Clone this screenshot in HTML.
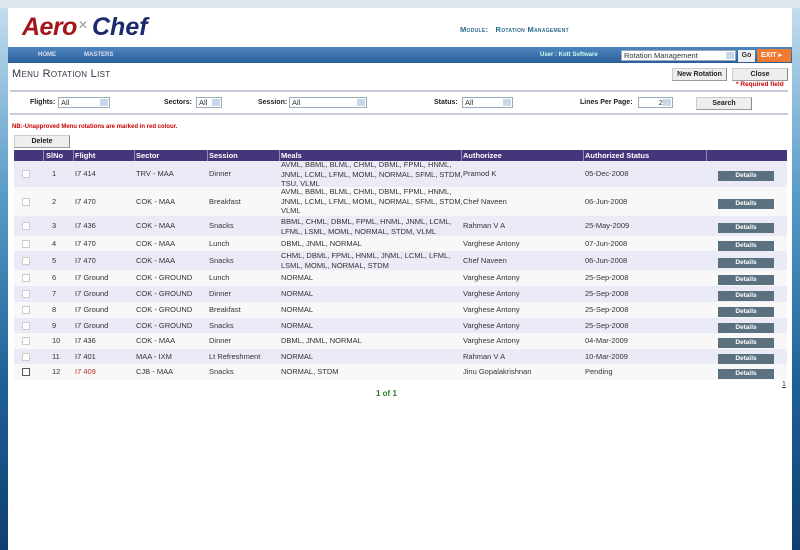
<!DOCTYPE html>
<html><head><meta charset="utf-8"><style>
*{margin:0;padding:0;box-sizing:border-box}
body{width:800px;height:550px;overflow:hidden;position:relative;font-family:"Liberation Sans",sans-serif;font-size:7.5px;color:#333;
background:linear-gradient(180deg,#c8dff0 0%,#5a9cc8 35%,#1e5f96 70%,#0f3f70 100%)}
.a{position:absolute}
#top{left:0;top:0;width:800px;height:8px;background:#dde7ec}
#panel{left:8px;top:8px;width:784px;height:542px;background:#fff}
.sel{position:absolute;height:11px;border:1px solid #9ab;background:#fff;font-size:7.5px;padding-left:2px;line-height:9px}
.sel:after{content:"";position:absolute;right:1px;top:1px;width:8px;height:7px;background:#c8d8ec}
.btn{position:absolute;height:13px;background:#eee;border:1px solid #ccc;border-right:1px solid #888;border-bottom:1px solid #999;font-weight:bold;font-size:7px;text-align:center;line-height:11px;color:#222}
.lbl{position:absolute;font-weight:bold;font-size:7px;color:#222}
.row{position:absolute;left:14px;width:773px}
.c{position:absolute;line-height:9.5px}
.cb{position:absolute;left:8px;width:8px;height:8px;border:1px solid #ccc;background:#fff}
.det{position:absolute;left:704px;width:56px;height:10px;background:#5b7180;color:#fff;font-weight:bold;font-size:6.5px;text-align:center;line-height:10px}
</style></head><body>
<div class="a" id="top"></div>
<div class="a" id="panel"></div>
<div class="a" style="left:22px;top:13px;font:italic bold 25px 'Liberation Sans',sans-serif;color:#a3161c;letter-spacing:-0.5px">Aero</div>
<div class="a" style="left:78px;top:18px;color:#999;font-size:12px">✕</div>
<div class="a" style="left:92px;top:13px;font:italic bold 25px 'Liberation Sans',sans-serif;color:#1a2a6a">Chef</div>
<div class="a" style="left:460px;top:25px;font-size:7.5px;font-weight:bold;color:#2a6a8a;font-variant:small-caps;letter-spacing:0.3px">Module:&nbsp;&nbsp; Rotation Management</div>
<div class="a" style="left:8px;top:47px;width:784px;height:16px;background:linear-gradient(#4f86c0,#2a5f9a)"></div>
<div class="a" style="left:38px;top:52px;color:#dde;font-size:6px;font-weight:bold">HOME</div>
<div class="a" style="left:84px;top:52px;color:#dde;font-size:6px;font-weight:bold">MASTERS</div>
<div class="a" style="left:540px;top:52px;color:#cfe;font-size:6px;font-weight:bold">User : Kott Software</div>
<div class="sel" style="left:621px;top:50px;width:115px">Rotation Management</div>
<div class="a" style="left:738px;top:50px;width:17px;height:12px;background:#eee;font-weight:bold;font-size:7px;text-align:center;line-height:12px">Go</div>
<div class="a" style="left:757px;top:49px;width:34px;height:13px;background:#f07a30;color:#fff;font-weight:bold;font-size:7px;line-height:13px;padding-left:4px">EXIT ▸</div>
<div class="a" style="left:12px;top:68px;font-size:11px;color:#334;font-variant:small-caps;letter-spacing:0.3px">Menu Rotation List</div>
<div class="btn" style="left:672px;top:68px;width:55px">New Rotation</div>
<div class="btn" style="left:732px;top:68px;width:56px">Close</div>
<div class="a" style="left:736px;top:81px;color:#c00;font-weight:bold;font-size:6.5px">* Required field</div>
<div class="a" style="left:10px;top:90px;width:778px;height:2px;background:#c8c8e0"></div>
<div class="a" style="left:10px;top:113px;width:778px;height:2px;background:#c8c8e0"></div>
<div class="lbl" style="left:30px;top:99px">Flights:</div><div class="sel" style="left:58px;top:97px;width:52px">All</div>
<div class="lbl" style="left:164px;top:99px">Sectors:</div><div class="sel" style="left:196px;top:97px;width:26px">All</div>
<div class="lbl" style="left:258px;top:99px">Session:</div><div class="sel" style="left:289px;top:97px;width:78px">All</div>
<div class="lbl" style="left:434px;top:99px">Status:</div><div class="sel" style="left:462px;top:97px;width:51px">All</div>
<div class="lbl" style="left:580px;top:99px">Lines Per Page:</div><div class="sel" style="left:638px;top:97px;width:35px;text-align:right;padding-right:2px">20*</div>
<div class="btn" style="left:696px;top:97px;width:56px">Search</div>
<div class="a" style="left:12px;top:124px;color:#c00;font-weight:bold;font-size:6px">NB:-Unapproved Menu rotations are marked in red colour.</div>
<div class="btn" style="left:14px;top:135px;width:56px">Delete</div>
<div class="row" style="top:150px;height:11px;background:#45357a;color:#fff;font-weight:bold">
<div class="c" style="left:32px;top:1px">SlNo</div><div class="c" style="left:61px;top:1px">Flight</div><div class="c" style="left:122px;top:1px">Sector</div><div class="c" style="left:195px;top:1px">Session</div><div class="c" style="left:267px;top:1px">Meals</div><div class="c" style="left:449px;top:1px">Authorizee</div><div class="c" style="left:571px;top:1px">Authorized Status</div>
<div class="a" style="left:29px;top:0;width:1px;height:11px;background:#9988bb"></div><div class="a" style="left:59px;top:0;width:1px;height:11px;background:#9988bb"></div><div class="a" style="left:120px;top:0;width:1px;height:11px;background:#9988bb"></div><div class="a" style="left:193px;top:0;width:1px;height:11px;background:#9988bb"></div><div class="a" style="left:265px;top:0;width:1px;height:11px;background:#9988bb"></div><div class="a" style="left:447px;top:0;width:1px;height:11px;background:#9988bb"></div><div class="a" style="left:569px;top:0;width:1px;height:11px;background:#9988bb"></div><div class="a" style="left:692px;top:0;width:1px;height:11px;background:#9988bb"></div>
</div>
<div id="rows"></div>
<script>
var R=[
[161,26,1,"I7 414","TRV - MAA","Dinner","AVML, BBML, BLML, CHML, DBML, FPML, HNML,<br>JNML, LCML, LFML, MOML, NORMAL, SFML, STDM,<br>TSU, VLML","Pramod K","05-Dec-2008"],
[187,29,2,"I7 470","COK - MAA","Breakfast","AVML, BBML, BLML, CHML, DBML, FPML, HNML,<br>JNML, LCML, LFML, MOML, NORMAL, SFML, STDM,<br>VLML","Chef Naveen","06-Jun-2008"],
[216,20,3,"I7 436","COK - MAA","Snacks","BBML, CHML, DBML, FPML, HNML, JNML, LCML,<br>LFML, LSML, MOML, NORMAL, STDM, VLML","Rahman V A","25-May-2009"],
[236,15,4,"I7 470","COK - MAA","Lunch","DBML, JNML, NORMAL","Varghese Antony","07-Jun-2008"],
[251,19,5,"I7 470","COK - MAA","Snacks","CHML, DBML, FPML, HNML, JNML, LCML, LFML,<br>LSML, MOML, NORMAL, STDM","Chef Naveen","06-Jun-2008"],
[270,16,6,"I7 Ground","COK - GROUND","Lunch","NORMAL","Varghese Antony","25-Sep-2008"],
[286,16,7,"I7 Ground","COK - GROUND","Dinner","NORMAL","Varghese Antony","25-Sep-2008"],
[302,16,8,"I7 Ground","COK - GROUND","Breakfast","NORMAL","Varghese Antony","25-Sep-2008"],
[318,15,9,"I7 Ground","COK - GROUND","Snacks","NORMAL","Varghese Antony","25-Sep-2008"],
[333,16,10,"I7 436","COK - MAA","Dinner","DBML, JNML, NORMAL","Varghese Antony","04-Mar-2009"],
[349,15,11,"I7 401","MAA - IXM","Lt Refreshment","NORMAL","Rahman V A","10-Mar-2009"],
[364,16,12,"I7 409","CJB - MAA","Snacks","NORMAL, STDM","Jinu Gopalakrishnan","Pending"]];
var h="";
R.forEach(function(r,i){
var nl=(r[6].match(/<br>/g)||[]).length+1;var ty=Math.round((r[1]-nl*9.5)/2);var sy=Math.round((r[1]-9.5)/2);
var bg=i%2==0?"#ebebf7":"#f8f8f8";
h+='<div class="row" style="top:'+r[0]+'px;height:'+r[1]+'px;background:'+bg+'">'+
'<div class="cb" style="top:'+(sy+1)+'px;'+(i==11?'border-color:#555':'')+'"></div>'+
'<div class="c" style="left:38px;top:'+sy+'px">'+r[2]+'</div>'+
'<div class="c" style="left:61px;top:'+sy+'px;'+(i==11?'color:#c03030':'')+'">'+r[3]+'</div>'+
'<div class="c" style="left:122px;top:'+sy+'px">'+r[4]+'</div>'+
'<div class="c" style="left:195px;top:'+sy+'px">'+r[5]+'</div>'+
'<div class="c" style="left:267px;top:'+ty+'px">'+r[6]+'</div>'+
'<div class="c" style="left:449px;top:'+sy+'px">'+r[7]+'</div>'+
'<div class="c" style="left:571px;top:'+sy+'px">'+r[8]+'</div>'+
'<div class="det" style="top:'+(sy+2)+'px">Details</div></div>';
});
document.getElementById("rows").innerHTML=h;
</script>
<div class="a" style="left:376px;top:389px;color:#2a7a2a;font-weight:bold;font-size:8px">1 of 1</div>
<div class="a" style="left:782px;top:381px;color:#336;font-size:7px;text-decoration:underline">1</div>
</body></html>
